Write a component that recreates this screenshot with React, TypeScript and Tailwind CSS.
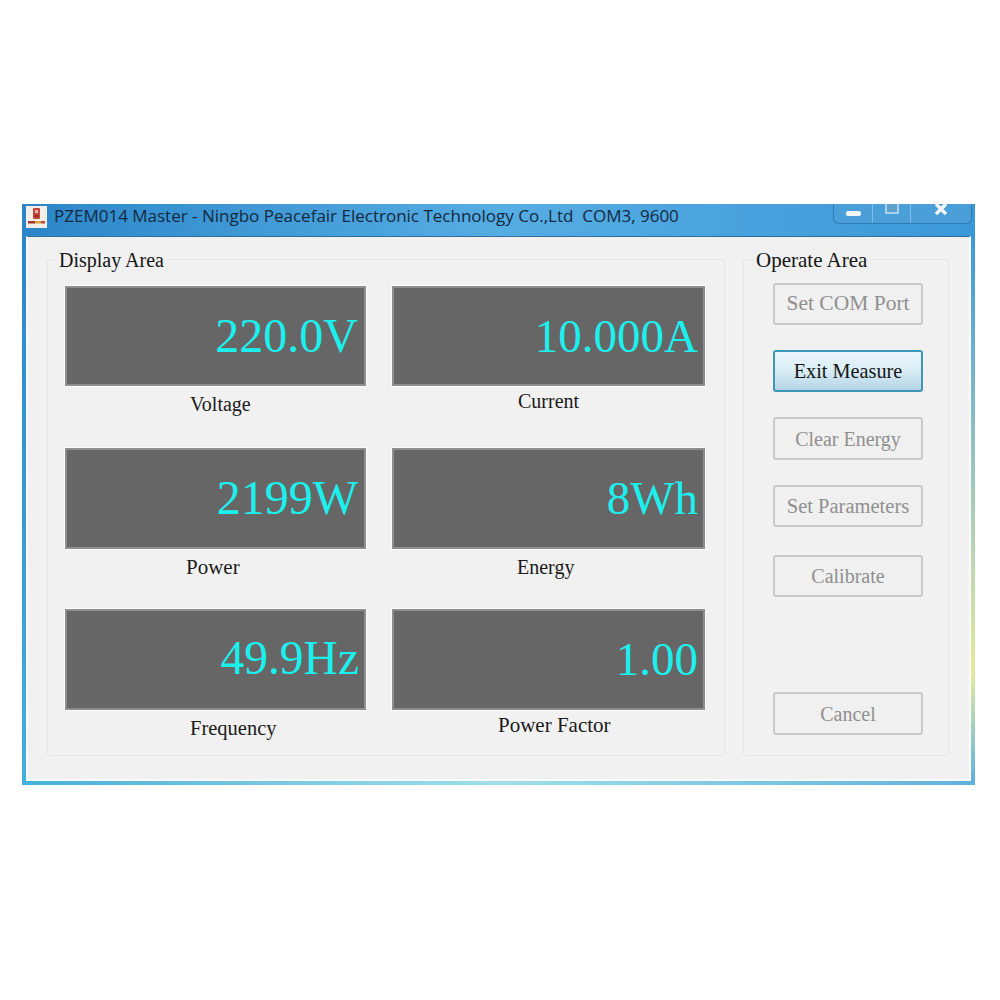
const serif = "font-['Liberation_Serif',serif]";

function Display({ value, label, w, boxCls, textCls, labelClass }: { value: string; label: string; w: string; boxCls: string; textCls: string; labelClass: string }) {
  return (
    <div className={`flex flex-col ${w}`}>
      <div className={`${boxCls} bg-[#666666] border-2 border-[#8e8e8e] shadow-[0_0_0_1px_#fbfbfb] flex items-center justify-end`}>
        <span className={`${serif} leading-none text-[#1cf0ee] ${textCls}`}>{value}</span>
      </div>
      <div className={`${serif} leading-[24px] text-[#1a1a1a] ${labelClass}`}>{label}</div>
    </div>
  );
}

function Btn({ label, cls, active }: { label: string; cls: string; active?: boolean }) {
  return (
    <div
      className={`${serif} w-[150px] flex items-center justify-center rounded-[3px] leading-none ${cls} ${
        active
          ? "border-2 border-[#3f97b8] bg-gradient-to-b from-[#eaf6fb] via-[#d9ecf5] to-[#b4d5e6] text-[#151515]"
          : "border-2 border-[#c9c9c9] bg-[#f0f0f0] text-[#8f8f8f]"
      }`}
    >
      {label}
    </div>
  );
}

function Legend({ children, cls }: { children: string; cls: string }) {
  return (
    <span className={`${serif} absolute -top-[12px] px-[2px] bg-[#f0f0f0] leading-[24px] text-[#141414] ${cls}`}>
      {children}
    </span>
  );
}

export default function App() {
  return (
    <div className="w-[1000px] h-[1000px] bg-white pt-[204px] pl-[22px]">
      <div className="w-[953px] h-[581px] flex flex-col">
        <div className="h-[32px] shrink-0 flex items-start justify-between bg-gradient-to-r from-[#2b86c9] via-[#56ade2] to-[#3b98d8] pl-[4px] pr-[3px]">
          <div className="flex items-start">
            <svg width="21" height="22" viewBox="0 0 21 22" className="shrink-0 mt-[2px]">
              <rect x="0" y="0" width="21" height="22" fill="#f3efe8" />
              <rect x="7" y="2" width="7" height="11" rx="1" fill="#c4473a" />
              <rect x="9" y="4" width="3" height="3" fill="#e8b9a8" />
              <rect x="8.5" y="9" width="4" height="2" fill="#8c2f28" />
              <rect x="2" y="15" width="7" height="2.5" fill="#a8352c" />
              <rect x="9" y="15" width="6" height="2.5" fill="#d9a23a" />
              <rect x="15" y="15" width="4" height="2.5" fill="#c4473a" />
            </svg>
            <span className="ml-[7px] mt-[3px] font-['Open_Sans',sans-serif] text-[17px] leading-[18px] whitespace-pre text-[#12293f]">
              {"PZEM014 Master - Ningbo Peacefair Electronic Technology Co.,Ltd  COM3, 9600"}
            </span>
          </div>
          <div className="flex h-[20px] w-[139px] rounded-b-[6px] border border-t-0 border-[#2f7db5] bg-[#4a9fd8]">
            <div className="w-[39px] border-r border-[#7fbde6] flex items-start justify-center pt-[7px]">
              <div className="w-[15px] h-[5px] bg-[#f2f6fa] rounded-[2px]" />
            </div>
            <div className="w-[38px] border-r border-[#7fbde6] flex items-start justify-center">
              <div className="w-[14px] h-[10px] border-2 border-t-0 border-[#a5d2f0] bg-[#5f9fcc]" />
            </div>
            <div className="flex-1 flex items-start justify-center">
              <svg width="14" height="11" viewBox="0 0 14 11">
                <path d="M2 0 L12 10 M12 0 L2 10" stroke="#f4f7fa" strokeWidth="3.5" />
              </svg>
            </div>
          </div>
        </div>
        <div className="flex h-[545px] shrink-0">
          <div className="w-[4px] bg-gradient-to-b from-[#2b86c9] to-[#45b0d8]" />
          <div className="w-[945px] border-t border-t-[#2a6f9c] border-x-2 border-b-2 border-x-[#fafafa] border-b-[#fafafa] bg-[#f1f1f1] flex gap-[18px] pt-[22px] pl-[19px]">
            <div className="relative w-[678px] h-[497px] border border-[#e5e5e5] rounded-[3px] pt-[26px] pl-[17px]">
              <Legend cls="left-[9px] text-[20px]">Display Area</Legend>
              <div className="grid grid-cols-[301px_313px] gap-x-[26px]">
                <Display value="220.0V" label="Voltage" w="w-[301px] h-[162px]" boxCls="h-[100px] pr-[6px]" textCls="text-[48px]" labelClass="text-[20px] pl-[125px] pt-[6px]" />
                <Display value="10.000A" label="Current" w="w-[313px] h-[162px]" boxCls="h-[100px] pr-[5px]" textCls="text-[47px]" labelClass="text-[20px] pl-[126px] pt-[3px]" />
                <Display value="2199W" label="Power" w="w-[301px] h-[161px]" boxCls="h-[101px] pr-[6px] pb-[1px]" textCls="text-[48px]" labelClass="text-[21px] pl-[121px] pt-[6px]" />
                <Display value="8Wh" label="Energy" w="w-[313px] h-[161px]" boxCls="h-[101px] pr-[5px] pb-[1px]" textCls="text-[47px]" labelClass="text-[20px] pl-[125px] pt-[6px]" />
                <Display value="49.9Hz" label="Frequency" w="w-[301px]" boxCls="h-[101px] pr-[5px] pb-[1px]" textCls="text-[47.5px]" labelClass="text-[20.5px] pl-[125px] pt-[6px]" />
                <Display value="1.00" label="Power Factor" w="w-[313px]" boxCls="h-[101px] pr-[5px] pb-[1px]" textCls="text-[47px]" labelClass="text-[21px] pl-[106px] pt-[3px]" />
              </div>
            </div>
            <div className="relative w-[206px] h-[497px] border border-[#e5e5e5] rounded-[3px] pt-[23px] pl-[29px]">
              <Legend cls="left-[10px] text-[21px]">Operate Area</Legend>
              <div className="flex flex-col">
                <Btn label="Set COM Port" cls="h-[42px] text-[21.5px]" />
                <Btn label="Exit Measure" cls="h-[42px] mt-[25px] text-[20.25px]" active />
                <Btn label="Clear Energy" cls="h-[43px] mt-[25px] text-[20px]" />
                <Btn label="Set Parameters" cls="h-[42px] mt-[25px] text-[20.5px]" />
                <Btn label="Calibrate" cls="h-[42px] mt-[28px] text-[20px]" />
                <Btn label="Cancel" cls="h-[43px] mt-[95px] text-[20px]" />
              </div>
            </div>
          </div>
          <div className="w-[4px] bg-gradient-to-b from-[#3b98d8] via-[#e4ea9a] via-80% to-[#5fb2dc]" />
        </div>
        <div className="h-[4px] shrink-0 bg-gradient-to-r from-[#45b0d8] via-[#9fdfe8] to-[#5fb2dc]" />
      </div>
    </div>
  );
}
